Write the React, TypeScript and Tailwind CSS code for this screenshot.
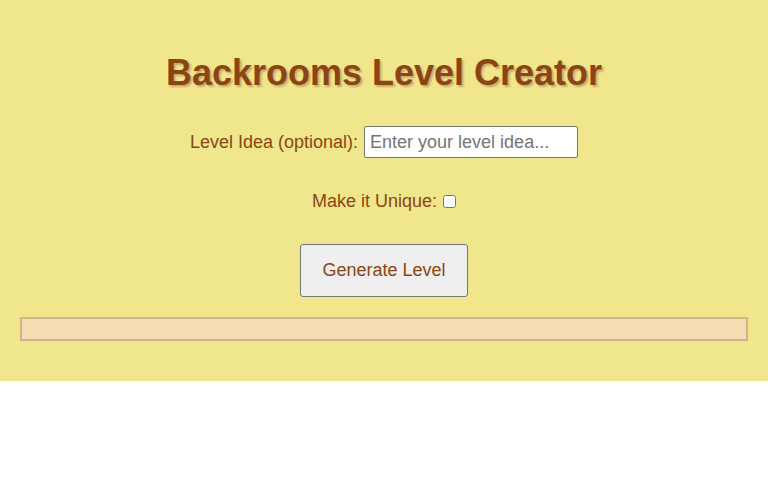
import { useState } from "react";

export default function App() {
  const [idea, setIdea] = useState("");
  const [unique, setUnique] = useState(false);

  return (
    <div className="min-h-screen bg-white font-['Liberation_Sans',Arial,sans-serif]">
      <div className="bg-[#f0e68c] px-5 pt-[52px] pb-10 text-[#8b4513]">
        {/* Title */}
        <h1 className="h-[41px] text-center text-[36px] font-bold leading-[41px] [text-shadow:2px_2px_2px_#c9a96e]">
          Backrooms Level Creator
        </h1>

        {/* Level idea */}
        <div className="mt-[33px] flex items-center justify-center gap-[6px]">
          <label htmlFor="idea" className="text-[18px] leading-[21px]">
            Level Idea (optional):
          </label>
          <input
            id="idea"
            value={idea}
            onChange={(e) => setIdea(e.target.value)}
            placeholder="Enter your level idea..."
            className="h-[32px] w-[214px] rounded-[2px] border border-[#767676] bg-white px-[5px] text-[18px] text-black placeholder:text-[#757575] outline-none"
          />
        </div>

        {/* Unique toggle */}
        <div className="mt-[33px] flex h-[21px] items-center justify-center gap-[6px]">
          <label htmlFor="unique" className="text-[18px] leading-[21px]">
            Make it Unique:
          </label>
          <input
            id="unique"
            type="checkbox"
            checked={unique}
            onChange={(e) => setUnique(e.target.checked)}
            className="m-0 h-[13px] w-[13px]"
          />
        </div>

        {/* Generate */}
        <div className="mt-[32px] flex justify-center">
          <button className="h-[53px] w-[168px] rounded-[3px] border border-[#767676] bg-[#efefef] text-[18px] text-[#8b4513]">
            Generate Level
          </button>
        </div>

        {/* Output */}
        <div className="mt-5 h-6 border-2 border-[#d2b48c] bg-[#f5deb3] p-[10px]" />
      </div>
    </div>
  );
}
